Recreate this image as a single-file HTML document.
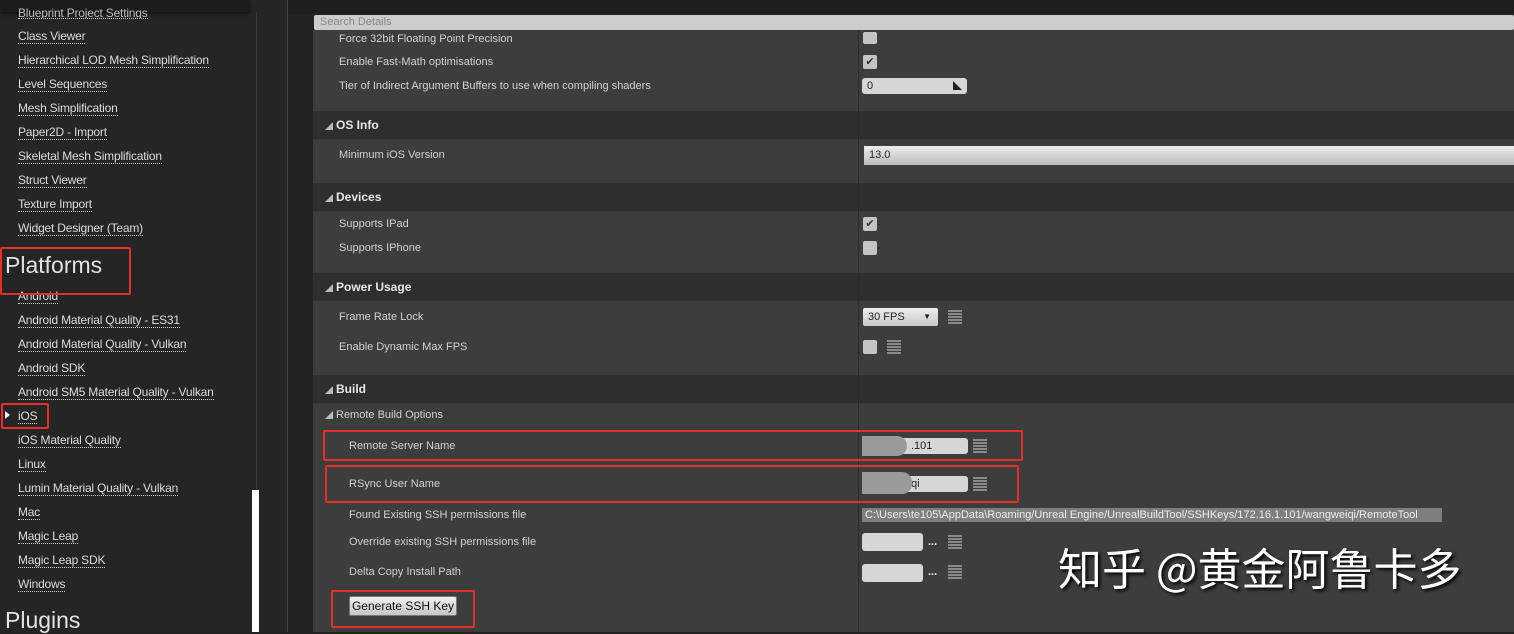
<!DOCTYPE html>
<html><head><meta charset="utf-8"><style>
*{margin:0;padding:0;box-sizing:border-box}
body{width:1514px;height:632px;overflow:hidden;background:#232323;font-family:"Liberation Sans","Noto Sans CJK SC",sans-serif;position:relative}
.a{position:absolute}
.lk{position:absolute;left:18px;font-size:12px;color:#dcdcdc;border-bottom:1px dotted #cfcfcf;line-height:14px;white-space:nowrap;letter-spacing:-0.2px}
.t{position:absolute;font-size:11px;color:#d2d2d2;white-space:nowrap;line-height:12px}
.h{position:absolute;left:313px;right:0;height:28px;background:#2e2e2e}
.hd{position:absolute;left:325px;font-size:12px;font-weight:bold;color:#e6e6e6;line-height:14px}
.tr{font-size:8px;color:#bbb;margin-right:3px}
.cb{position:absolute;width:14px;height:14px;background:#c4c4c4;border-radius:2px;color:#333;font-size:11px;line-height:14px;text-align:center}
.g{position:absolute;width:14px;height:14px;background:repeating-linear-gradient(#8a8a8a 0 2px,transparent 2px 3px)}
.fld{position:absolute;background:#d6d6d6;border-radius:3px;font-size:11px;color:#222;line-height:16px;padding-left:5px}
.rb{position:absolute;border:2px solid #e3302a;border-radius:2px}
</style></head><body>
<div class="a" style="left:0;top:0;width:287px;height:632px;background:#252525"></div>
<div class="a" style="left:256px;top:12px;width:1px;height:620px;background:#3a3a3a"></div>
<div class="a" style="left:287px;top:0;width:1px;height:632px;background:#444"></div>
<div class="a" style="left:252px;top:490px;width:7px;height:142px;background:#fff"></div>
<div class="a" style="left:0;top:0;width:250px;height:12px;background:#1c1c1c;box-shadow:0 2px 3px #111"></div>
<div class="lk" style="top:6px;height:13px;overflow:hidden;color:#bbb">Blueprint Project Settings</div>
<div class="lk" style="top:29px">Class Viewer</div>
<div class="lk" style="top:53px">Hierarchical LOD Mesh Simplification</div>
<div class="lk" style="top:77px">Level Sequences</div>
<div class="lk" style="top:101px">Mesh Simplification</div>
<div class="lk" style="top:125px">Paper2D - Import</div>
<div class="lk" style="top:149px">Skeletal Mesh Simplification</div>
<div class="lk" style="top:173px">Struct Viewer</div>
<div class="lk" style="top:197px">Texture Import</div>
<div class="lk" style="top:221px">Widget Designer (Team)</div>
<div class="a" style="left:5px;top:252px;font-size:23px;color:#e2e2e2">Platforms</div>
<div class="lk" style="top:289px">Android</div>
<div class="lk" style="top:313px">Android Material Quality - ES31</div>
<div class="lk" style="top:337px">Android Material Quality - Vulkan</div>
<div class="lk" style="top:361px">Android SDK</div>
<div class="lk" style="top:385px">Android SM5 Material Quality - Vulkan</div>
<div class="a" style="left:5px;top:411px;width:0;height:0;border-left:5px solid #eee;border-top:4px solid transparent;border-bottom:4px solid transparent"></div>
<div class="lk" style="top:409px">iOS</div>
<div class="lk" style="top:433px">iOS Material Quality</div>
<div class="lk" style="top:457px">Linux</div>
<div class="lk" style="top:481px">Lumin Material Quality - Vulkan</div>
<div class="lk" style="top:505px">Mac</div>
<div class="lk" style="top:529px">Magic Leap</div>
<div class="lk" style="top:553px">Magic Leap SDK</div>
<div class="lk" style="top:577px">Windows</div>
<div class="a" style="left:5px;top:607px;font-size:23px;color:#e2e2e2">Plugins</div>

<div class="a" style="left:288px;top:0;width:1226px;height:14px;background:#1f1f1f"></div>
<div class="a" style="left:313px;top:30px;width:1201px;height:602px;background:#3d3d3d"></div>
<div class="a" style="left:314px;top:15px;width:1200px;height:15px;background:#cccccc;border-radius:2px;font-size:11px;color:#888;padding-left:6px;line-height:15px">Search Details</div>
<div class="h" style="top:111px"></div><div class="h" style="top:183px"></div><div class="h" style="top:273px"></div><div class="h" style="top:375px"></div>
<div class="a" style="left:858px;top:30px;width:1px;height:602px;background:#2a2a2a"></div>

<div class="t" style="left:339px;top:33px">Force 32bit Floating Point Precision</div>
<div class="cb" style="left:863px;top:32px;height:12px"></div>
<div class="t" style="left:339px;top:56px">Enable Fast-Math optimisations</div>
<div class="cb" style="left:863px;top:55px">✔</div>
<div class="t" style="left:339px;top:80px">Tier of Indirect Argument Buffers to use when compiling shaders</div>
<div class="fld" style="left:862px;top:78px;width:105px">0<span style="position:absolute;right:5px;font-size:9px">◣</span></div>
<div class="hd" style="top:118px"><span class="tr">◢</span>OS Info</div>
<div class="t" style="left:339px;top:149px">Minimum iOS Version</div>
<div class="fld" style="left:864px;top:146px;width:660px;height:19px;line-height:19px;background:linear-gradient(#eee,#b9b9b9);border-radius:0">13.0</div>
<div class="hd" style="top:190px"><span class="tr">◢</span>Devices</div>
<div class="t" style="left:339px;top:218px">Supports IPad</div>
<div class="cb" style="left:863px;top:217px">✔</div>
<div class="t" style="left:339px;top:242px">Supports IPhone</div>
<div class="cb" style="left:863px;top:241px"></div>
<div class="hd" style="top:280px"><span class="tr">◢</span>Power Usage</div>
<div class="t" style="left:339px;top:311px">Frame Rate Lock</div>
<div class="fld" style="left:863px;top:308px;width:75px;height:18px;line-height:18px;background:linear-gradient(#eee,#c8c8c8);border-radius:2px">30 FPS<span style="position:absolute;right:7px;font-size:8px">▼</span></div>
<div class="g" style="left:948px;top:310px"></div>
<div class="t" style="left:339px;top:341px">Enable Dynamic Max FPS</div>
<div class="cb" style="left:863px;top:340px"></div>
<div class="g" style="left:887px;top:340px"></div>
<div class="hd" style="top:382px"><span class="tr">◢</span>Build</div>
<div class="t" style="left:325px;top:409px"><span class="tr">◢</span>Remote Build Options</div>
<div class="t" style="left:349px;top:440px">Remote Server Name</div>
<div class="fld" style="left:862px;top:438px;width:106px;padding-left:49px">.101</div>
<div class="a" style="left:862px;top:436px;width:45px;height:20px;background:#9a9a9a;border-radius:0 10px 10px 0"></div>
<div class="g" style="left:973px;top:439px"></div>
<div class="t" style="left:349px;top:478px">RSync User Name</div>
<div class="fld" style="left:862px;top:476px;width:106px;padding-left:49px">qi</div>
<div class="a" style="left:862px;top:472px;width:50px;height:22px;background:#9a9a9a;border-radius:0 10px 10px 0"></div>
<div class="g" style="left:973px;top:477px"></div>
<div class="t" style="left:349px;top:509px">Found Existing SSH permissions file</div>
<div class="a" style="left:862px;top:508px;width:580px;height:14px;background:#7e7e7e;font-size:11px;color:#eee;line-height:14px;padding-left:3px;white-space:nowrap;overflow:hidden">C:\Users\te105\AppData\Roaming/Unreal Engine/UnrealBuildTool/SSHKeys/172.16.1.101/wangweiqi/RemoteTool</div>
<div class="t" style="left:349px;top:536px">Override existing SSH permissions file</div>
<div class="fld" style="left:862px;top:533px;width:61px;height:18px"></div>
<div class="a" style="left:928px;top:536px;color:#eee;font-size:11px;font-weight:bold">...</div>
<div class="g" style="left:948px;top:535px"></div>
<div class="t" style="left:349px;top:566px">Delta Copy Install Path</div>
<div class="fld" style="left:862px;top:564px;width:61px;height:18px"></div>
<div class="a" style="left:928px;top:566px;color:#eee;font-size:11px;font-weight:bold">...</div>
<div class="g" style="left:948px;top:565px"></div>
<div class="a" style="left:349px;top:596px;width:108px;height:20px;background:linear-gradient(#f0f0f0,#c6c6c6);border:1px solid #777;border-radius:2px;font-size:12px;color:#111;text-align:center;line-height:18px">Generate SSH Key</div>

<div class="rb" style="left:0;top:247px;width:131px;height:48px"></div>
<div class="rb" style="left:1px;top:403px;width:48px;height:26px"></div>
<div class="rb" style="left:323px;top:430px;width:700px;height:31px"></div>
<div class="rb" style="left:325px;top:465px;width:694px;height:38px"></div>
<div class="rb" style="left:331px;top:590px;width:144px;height:38px"></div>

<div class="a" style="left:1058px;top:539px;font-size:44px;color:#fff;white-space:nowrap;text-shadow:2px 2px 3px #000;font-family:'Noto Sans CJK SC',sans-serif;line-height:54px">知乎 @黄金阿鲁卡多</div>
</body></html>
